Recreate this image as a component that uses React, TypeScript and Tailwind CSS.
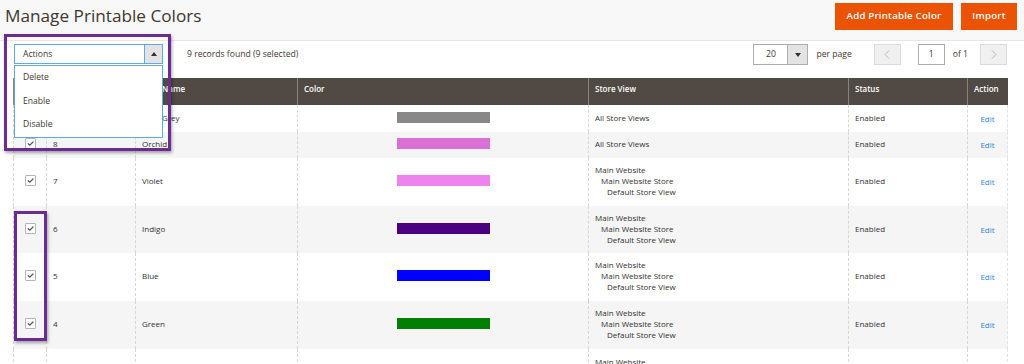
import React from "react";

type Row = { id: number; name: string; color: string; multi: boolean; h: string; bg: string; namePad?: string; partial?: boolean };

const rows: Row[] = [
  { id: 9, name: "Grey", color: "#888888", multi: false, h: "h-[27px]", bg: "bg-white", namePad: "pl-[26px]" },
  { id: 8, name: "Orchid", color: "#da70d6", multi: false, h: "h-[26px]", bg: "bg-[#f5f5f5]" },
  { id: 7, name: "Violet", color: "#ee82ee", multi: true, h: "h-[48px]", bg: "bg-white" },
  { id: 6, name: "Indigo", color: "#4b0082", multi: true, h: "h-[47px]", bg: "bg-[#f5f5f5]" },
  { id: 5, name: "Blue", color: "#0000ff", multi: true, h: "h-[48px]", bg: "bg-white" },
  { id: 4, name: "Green", color: "#008000", multi: true, h: "h-[48px]", bg: "bg-[#f5f5f5]" },
  { id: 3, name: "", color: "transparent", multi: true, h: "h-[48px]", bg: "bg-white", partial: true },
];

function Check() {
  return (
    <span className="inline-flex w-[11px] h-[11px] border border-[#b5b5b5] bg-white rounded-[1px] items-center justify-center">
      <svg width="9" height="9" viewBox="0 0 9 9">
        <path d="M2.2 4.7 L3.9 6.2 L7 3" fill="none" stroke="#555" strokeWidth="1.2" strokeLinecap="round" strokeLinejoin="round" />
      </svg>
    </span>
  );
}

const td = "border-l border-dashed border-[#d6d6d6] px-[6px] pb-[3px] align-middle";
const th = "bg-[#514943] text-white font-semibold text-[8px] leading-[11px] text-left align-top pt-[5px] px-[6px] border-l border-[#8a837f]";

export default function App() {
  return (
    <div className="relative w-[1024px] h-[364px] overflow-hidden bg-white font-['Open_Sans',sans-serif] text-[#303030]">
      {/* Page header */}
      <div className="h-[41px] bg-[#f8f8f8] border-b border-[#e6e6e6] flex justify-between">
        <h1 className="pl-[5px] pt-[4px] text-[17.2px] leading-[23px] font-normal text-[#41362f]">Manage Printable Colors</h1>
        <div className="flex gap-[8px] pt-[3px] pr-[7px]">
          <button className="h-[27px] w-[118px] bg-[#eb5202] border border-[#eb5202] text-white text-[9.7px] font-semibold tracking-[0.2px]">
            Add Printable Color
          </button>
          <button className="h-[27px] w-[56px] bg-[#eb5202] border border-[#eb5202] text-white text-[9.7px] font-semibold tracking-[0.2px]">
            Import
          </button>
        </div>
      </div>

      {/* Toolbar */}
      <div className="h-[37px] flex items-start pt-[3px] pl-[14px] pr-[17px] text-[8.6px] text-[#41362f]">
        <div className="relative flex w-[149px] h-[20px] border border-[#61a8e8] bg-white">
          <div className="flex-1 flex items-center pl-[8px]">Actions</div>
          <div className="w-[18px] bg-[#e3e3e3] border-l border-[#61a8e8] flex items-center justify-center">
            <svg width="6" height="4" viewBox="0 0 6 4">
              <path d="M0 4 L3 0 L6 4 Z" fill="#303030" />
            </svg>
          </div>
        </div>
        <div className="ml-[24px] h-[20px] flex items-center">9 records found (9 selected)</div>
        <div className="ml-auto flex items-center h-[21px]">
          <div className="flex h-[21px] border border-[#adadad] bg-white">
            <div className="w-[33px] flex items-center justify-center">20</div>
            <div className="w-[20px] bg-[#e3e3e3] border-l border-[#adadad] flex items-center justify-center">
              <svg width="6" height="4" viewBox="0 0 6 4">
                <path d="M0 0 L6 0 L3 4 Z" fill="#303030" />
              </svg>
            </div>
          </div>
          <span className="ml-[8px]">per page</span>
          <div className="ml-[22px] w-[27px] h-[21px] bg-[#f0f0f0] border border-[#dadada] flex items-center justify-center">
            <svg width="6" height="9" viewBox="0 0 6 9">
              <path d="M5 0.5 L1 4.5 L5 8.5" fill="none" stroke="#b5b5b5" strokeWidth="1" />
            </svg>
          </div>
          <div className="ml-[17px] w-[27px] h-[21px] bg-white border border-[#adadad] flex items-center justify-center">1</div>
          <span className="ml-[8px]">of 1</span>
          <div className="ml-[12px] w-[27px] h-[21px] bg-[#f0f0f0] border border-[#dadada] flex items-center justify-center">
            <svg width="6" height="9" viewBox="0 0 6 9">
              <path d="M1 0.5 L5 4.5 L1 8.5" fill="none" stroke="#b5b5b5" strokeWidth="1" />
            </svg>
          </div>
        </div>
      </div>

      {/* Grid */}
      <table className="ml-[13px] w-[994px] table-fixed border-collapse text-[8px] leading-[11px]">
        <colgroup>
          <col className="w-[33px]" />
          <col className="w-[89px]" />
          <col className="w-[162px]" />
          <col className="w-[291px]" />
          <col className="w-[260px]" />
          <col className="w-[119px]" />
          <col className="w-[40px]" />
        </colgroup>
        <thead>
          <tr className="h-[27px]">
            <th className={th}></th>
            <th className={th}>ID</th>
            <th className={`${th} pl-[26px]`}>Name</th>
            <th className={th}>Color</th>
            <th className={th}>Store View</th>
            <th className={th}>Status</th>
            <th className={`${th} text-center px-0`}>Action</th>
          </tr>
        </thead>
        <tbody>
          {rows.map((r) =>
            r.partial ? (
              <tr key={r.id} className={`${r.h} ${r.bg}`}>
                <td className={td}></td>
                <td className={td}></td>
                <td className={td}></td>
                <td className={td}></td>
                <td className={`${td} align-top pt-[7px]`}>
                  <div>Main Website</div>
                </td>
                <td className={td}></td>
                <td className={`${td} border-r border-r-solid border-r-[#e3e3e3]`}></td>
              </tr>
            ) : (
              <tr key={r.id} className={`${r.h} ${r.bg}`}>
                <td className={`${td} text-center px-0`}>
                  <div className="flex justify-center">
                    <Check />
                  </div>
                </td>
                <td className={td}>{r.id}</td>
                <td className={`${td} ${r.namePad ?? ""}`}>{r.name}</td>
                <td className={td}>
                  <div className="flex justify-center">
                    <div className="w-[93px] h-[11px]" style={{ backgroundColor: r.color }} />
                  </div>
                </td>
                <td className={td}>
                  {r.multi ? (
                    <div>
                      <div>Main Website</div>
                      <div className="pl-[6px]">Main Website Store</div>
                      <div className="pl-[12px]">Default Store View</div>
                    </div>
                  ) : (
                    <div>All Store Views</div>
                  )}
                </td>
                <td className={td}>Enabled</td>
                <td className={`${td} border-r border-r-solid border-r-[#e3e3e3] text-center px-0`}>
                  <span className="relative top-[1px] text-[#2b83d8]">Edit</span>
                </td>
              </tr>
            )
          )}
        </tbody>
      </table>

      {/* Open actions dropdown */}
      <div className="absolute left-[14px] top-[65px] w-[149px] bg-white border border-[#61a8e8] text-[8.6px] text-[#41362f]">
        <div className="h-[23.5px] flex items-center pl-[8px]">Delete</div>
        <div className="h-[23.5px] flex items-center pl-[8px]">Enable</div>
        <div className="h-[23.5px] flex items-center pl-[8px]">Disable</div>
      </div>

      {/* Highlight frames */}
      <div className="absolute left-[4px] top-[34px] w-[167px] h-[117px] border-[3px] border-[#6a2c8f] shadow-[1px_2px_3px_rgba(0,0,0,0.35)]" />
      <div className="absolute left-[14px] top-[211px] w-[33px] h-[130px] border-[3px] border-[#6a2c8f] shadow-[1px_2px_3px_rgba(0,0,0,0.35)]" />
    </div>
  );
}
